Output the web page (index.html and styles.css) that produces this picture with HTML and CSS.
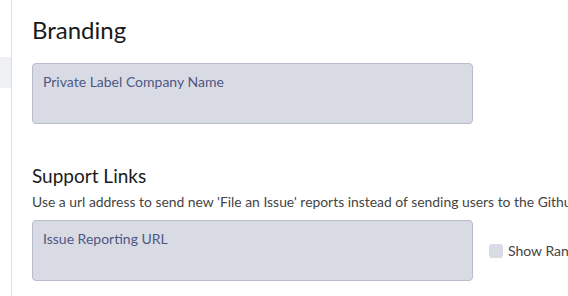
FILE: index.html
```html
<!DOCTYPE html>
<html lang="en">
<head>
  <meta charset="UTF-8" />
  <title>Settings</title>
  <link rel="stylesheet" href="styles.css">
</head>
<body>
<div class="layout">
  <aside class="sidebar">
    <div class="side-item active"></div>
  </aside>

  <main class="content">
    <h1>Branding</h1>
    <div class="row">
      <div class="field"><span>Private Label Company Name</span></div>
    </div>

    <h2>Support Links</h2>
    <p class="hint">Use a url address to send new 'File an Issue' reports instead of sending users to the Github issues page.</p>
    <div class="row">
      <div class="field"><span>Issue Reporting URL</span></div>
      <label class="check"><span class="box"></span>Show Random Bug Icon</label>
    </div>
  </main>
</div>
</body>
</html>
```

FILE: styles.css
```css
:root {
  --line: #dcdee6;
  --field: #d8dbe4;
  --field-border: #b8bbcc;
  --label: #4f5783;
  --text: #444;
}

* { box-sizing: border-box; margin: 0; padding: 0; }

body {
  font-family: Lato, 'Open Sans', sans-serif;
  background: #fff;
  color: #1a1a1a;
  overflow: hidden;
}

.layout {
  display: flex;
  min-height: 296px;
}

.sidebar {
  width: 12px;
  flex-shrink: 0;
  border-right: 1px solid var(--line);
  padding-top: 57px;
}

.side-item {
  height: 31px;
}

.side-item.active {
  background: #eef0f4;
}

.content {
  padding: 14px 0 0 20px;
  white-space: nowrap;
  overflow: hidden;
}

h1 {
  font-size: 24px;
  font-weight: 400;
  line-height: 32px;
  margin-bottom: 17px;
}

h2 {
  font-size: 19px;
  font-weight: 400;
  line-height: 24px;
  margin-top: 40px;
  margin-bottom: 5px;
}

.hint {
  font-size: 13.9px;
  line-height: 17px;
  color: var(--text);
  margin-bottom: 10px;
}

.row {
  display: flex;
  align-items: center;
  gap: 16px;
}

.field {
  flex-shrink: 0;
  width: 441px;
  height: 61px;
  background: var(--field);
  border: 1px solid var(--field-border);
  border-radius: 4px;
  padding: 9px 10px;
  font-size: 14px;
  line-height: 17px;
  color: var(--label);
}

.check {
  flex-shrink: 0;
  display: flex;
  align-items: center;
  gap: 5px;
  font-size: 14px;
  color: var(--text);
}

.box {
  width: 14px;
  height: 14px;
  border-radius: 3px;
  background: var(--field);
}
```
